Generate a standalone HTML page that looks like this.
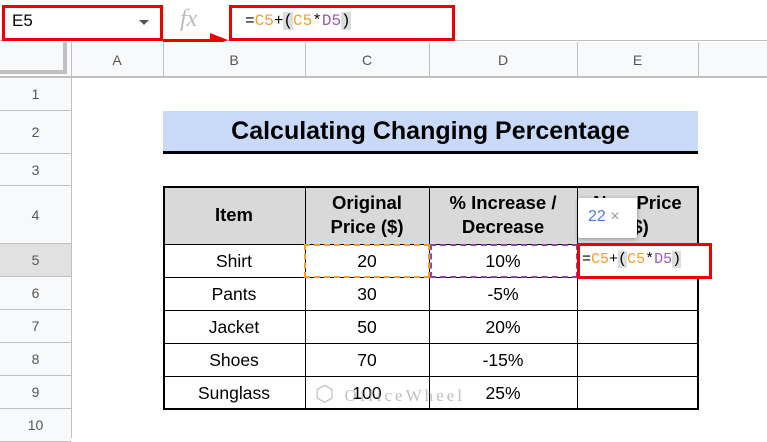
<!DOCTYPE html><html><head><style>
*{margin:0;padding:0;box-sizing:border-box}
body{width:767px;height:438px;overflow:hidden;background:#fff;font-family:"Liberation Sans",Arial,sans-serif;position:relative}
.a{position:absolute}
.hl{position:absolute;background:#c0c0c0}
.ch{position:absolute;top:41px;height:37px;display:flex;align-items:center;justify-content:center;color:#555;font-size:14px}
.rh{position:absolute;left:0;width:71px;display:flex;align-items:center;justify-content:center;color:#555;font-size:14px;border-bottom:1px solid #c0c0c0;background:#f8f9fa}
.c{position:absolute;display:flex;align-items:center;justify-content:center;text-align:center;font-size:17.5px;color:#000;line-height:24px}
.b{font-weight:bold;font-size:18.5px}
.f{font-family:"Liberation Mono",monospace;font-size:16px}
</style></head><body>
<div class="a" style="left:0;top:0;width:767px;height:41px;background:#fff;border-bottom:1px solid #c0c0c0"></div>
<div class="a" style="left:2px;top:5px;width:161px;height:36px;border:3px solid #e00;"></div>
<div class="a" style="left:12px;top:11px;font-size:17px">E5</div>
<div class="a" style="left:139px;top:20px;width:0;height:0;border-left:5px solid transparent;border-right:5px solid transparent;border-top:5px solid #555"></div>
<div class="a" style="left:180px;top:6px;font-family:'Liberation Serif',serif;font-style:italic;font-size:24px;color:#bbb">fx</div>
<div class="a" style="left:229px;top:5px;width:226px;height:36px;border:3px solid #e00"></div>
<div class="a f" style="left:245px;top:12px"><span>=</span><span style="color:#f59d2a">C5</span>+<span style="background:#ddd">(</span><span style="color:#f59d2a">C5</span>*<span style="color:#9b59b6">D5</span><span style="background:#ddd">)</span></div>
<div class="a" style="left:163px;top:39px;width:50px;height:3px;background:#e00"></div>
<div class="a" style="left:210px;top:33px;width:0;height:0;border-top:7px solid transparent;border-bottom:7px solid transparent;border-left:18px solid #e00"></div>
<div class="a" style="left:0;top:42px;width:767px;height:36px;background:#f8f9fa;border-bottom:2px solid #c0c0c0"></div>
<div class="a" style="left:0;top:42px;width:67px;height:32px;border-right:4px solid #c0c0c0;border-bottom:4px solid #c0c0c0"></div>
<div class="hl" style="left:71px;top:42px;width:1px;height:396px"></div>
<div class="ch" style="left:71px;width:92px">A</div><div class="hl" style="left:163px;top:42px;width:1px;height:36px"></div>
<div class="ch" style="left:163px;width:142px">B</div><div class="hl" style="left:305px;top:42px;width:1px;height:36px"></div>
<div class="ch" style="left:305px;width:124px">C</div><div class="hl" style="left:429px;top:42px;width:1px;height:36px"></div>
<div class="ch" style="left:429px;width:148px">D</div><div class="hl" style="left:577px;top:42px;width:1px;height:36px"></div>
<div class="ch" style="left:577px;width:121px">E</div><div class="hl" style="left:698px;top:42px;width:1px;height:36px"></div>
<div class="rh" style="top:78px;height:33px">1</div>
<div class="rh" style="top:111px;height:43px">2</div>
<div class="rh" style="top:154px;height:32px">3</div>
<div class="rh" style="top:186px;height:58px">4</div>
<div class="rh" style="top:244px;height:33px;background:#e1e1e1">5</div>
<div class="rh" style="top:277px;height:33px">6</div>
<div class="rh" style="top:310px;height:33px">7</div>
<div class="rh" style="top:343px;height:33px">8</div>
<div class="rh" style="top:376px;height:33px">9</div>
<div class="rh" style="top:409px;height:33px">10</div>
<div class="c b" style="left:163px;top:111px;width:535px;height:43px;background:#c9daf8;border-bottom:3px solid #000;font-size:25px">Calculating Changing Percentage</div>
<div class="a" style="left:163px;top:186px;width:535px;height:58px;background:#d9d9d9"></div>
<div class="a" style="left:163px;top:186px;width:536px;height:224px;border:2px solid #000"></div>
<div class="a" style="left:305px;top:186px;width:1px;height:223px;background:#000"></div>
<div class="a" style="left:429px;top:186px;width:1px;height:223px;background:#000"></div>
<div class="a" style="left:577px;top:186px;width:1px;height:223px;background:#000"></div>
<div class="a" style="left:163px;top:244px;width:535px;height:1px;background:#000"></div>
<div class="a" style="left:163px;top:277px;width:535px;height:1px;background:#000"></div>
<div class="a" style="left:163px;top:310px;width:535px;height:1px;background:#000"></div>
<div class="a" style="left:163px;top:343px;width:535px;height:1px;background:#000"></div>
<div class="a" style="left:163px;top:376px;width:535px;height:1px;background:#000"></div>
<div class="c b" style="left:163px;top:186px;width:142px;height:58px">Item</div>
<div class="c b" style="left:305px;top:186px;width:124px;height:58px">Original<br>Price ($)</div>
<div class="c b" style="left:429px;top:186px;width:148px;height:58px">% Increase /<br>Decrease</div>
<div class="c b" style="left:577px;top:186px;width:121px;height:58px">New Price<br>($)</div>
<div class="c" style="left:163px;top:244px;width:142px;height:33px">Shirt</div>
<div class="c" style="left:163px;top:277px;width:142px;height:33px">Pants</div>
<div class="c" style="left:163px;top:310px;width:142px;height:33px">Jacket</div>
<div class="c" style="left:163px;top:343px;width:142px;height:33px">Shoes</div>
<div class="c" style="left:163px;top:376px;width:142px;height:33px">Sunglass</div>
<div class="c" style="left:305px;top:244px;width:124px;height:33px">20</div>
<div class="c" style="left:305px;top:277px;width:124px;height:33px">30</div>
<div class="c" style="left:305px;top:310px;width:124px;height:33px">50</div>
<div class="c" style="left:305px;top:343px;width:124px;height:33px">70</div>
<div class="c" style="left:305px;top:376px;width:124px;height:33px">100</div>
<div class="c" style="left:429px;top:244px;width:148px;height:33px">10%</div>
<div class="c" style="left:429px;top:277px;width:148px;height:33px">-5%</div>
<div class="c" style="left:429px;top:310px;width:148px;height:33px">20%</div>
<div class="c" style="left:429px;top:343px;width:148px;height:33px">-15%</div>
<div class="c" style="left:429px;top:376px;width:148px;height:33px">25%</div>
<div class="a" style="left:304px;top:244px;width:126px;height:34px;border:2px dashed #f59d2a"></div>
<div class="a" style="left:430px;top:244px;width:148px;height:34px;border:2px dashed #8e44ad"></div>
<div class="a" style="left:577px;top:243px;width:135px;height:36px;border:3px solid #e00;background:#fff"></div>
<div class="a f" style="left:582px;top:251px;font-size:15px"><span>=</span><span style="color:#f59d2a">C5</span>+<span style="background:#ddd">(</span><span style="color:#f59d2a">C5</span>*<span style="color:#9b59b6">D5</span><span style="background:#ddd">)</span></div>
<div class="a" style="left:578px;top:198px;width:59px;height:40px;background:#fff;box-shadow:0 1px 4px rgba(0,0,0,.35);border-radius:2px;font-size:16px;padding:10px 0 0 10px"><span style="color:#4a7fd9">22</span> <span style="color:#999">×</span></div>
<div class="a" style="left:315px;top:381px;font-family:'Liberation Serif',serif;font-size:17px;letter-spacing:3px;color:rgba(150,150,150,.6)"><span style="font-size:22px">⬡</span> OfficeWheel</div>
</body></html>
